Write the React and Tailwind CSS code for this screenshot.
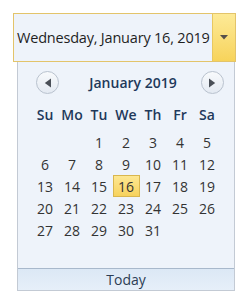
import React from 'react';

const DAYS = ['Su', 'Mo', 'Tu', 'We', 'Th', 'Fr', 'Sa'];
const CELLS = [null, null, ...Array.from({ length: 31 }, (_, i) => i + 1)];

const NavButton = ({ dir }) => (
  <div className="w-[23px] h-[23px] rounded-full border border-[#b9c2ce] bg-gradient-to-b from-[#f8fafc] to-[#e4eaf2] flex items-center justify-center">
    <svg width="8" height="10" viewBox="0 0 8 10">
      {dir === 'left' ? (
        <path d="M7 0.5 L0.8 5 L7 9.5 Z" fill="#4a4f57" />
      ) : (
        <path d="M1 0.5 L7.2 5 L1 9.5 Z" fill="#4a4f57" />
      )}
    </svg>
  </div>
);

export default function App() {
  return (
    <div
      className="w-[248px] h-[300px] bg-white relative"
      style={{ fontFamily: '"Open Sans", "Noto Sans", sans-serif' }}
    >
      {/* combo box */}
      <div className="absolute left-[13px] top-[13px] w-[223px] h-[49px] border border-[#e3c46a] bg-[#eef3fa] flex">
        <div className="flex-1 flex items-center pl-[3px] text-[14.5px] text-[#1f1f1f] tracking-[-0.2px] whitespace-nowrap">
          Wednesday, January 16, 2019
        </div>
        <div className="w-[23px] bg-gradient-to-b from-[#fdea96] to-[#f7d35a] border-l border-[#e8c860] flex items-center justify-center">
          <svg width="8" height="5" viewBox="0 0 8 5">
            <path d="M0 0 H8 L4 4.5 Z" fill="#55504a" />
          </svg>
        </div>
      </div>

      {/* popup */}
      <div className="absolute left-[17px] top-[62px] w-[218px] h-[229px] border border-[#c3cad4] border-t-0 bg-[#eef3fa] flex flex-col">
        <div className="pt-[9px] pl-[18px] pr-[10px] h-[23px] flex items-center justify-between box-content">
          <NavButton dir="left" />
          <div className="text-[14px] font-semibold text-[#1e395b] pl-[6px]">January 2019</div>
          <NavButton dir="right" />
        </div>

        <div className="w-[189px] mx-auto mt-[9px] grid grid-cols-7">
          {DAYS.map((d) => (
            <div key={d} className="h-[22px] flex items-center justify-center text-[14px] font-semibold text-[#1e395b]">
              {d}
            </div>
          ))}
        </div>

        <div className="w-[189px] mx-auto mt-[6px] grid grid-cols-7">
          {CELLS.map((n, i) => (
            <div
              key={i}
              className={`h-[22px] flex items-center justify-center text-[14px] text-[#333] ${
                n === 16 ? 'bg-gradient-to-b from-[#fde791] to-[#f7d25c] border border-[#d9b64e] text-[#111]' : ''
              }`}
            >
              {n}
            </div>
          ))}
        </div>

        <div className="flex-1" />

        <div className="h-[22px] border-t border-[#a8b8cb] bg-gradient-to-b from-[#dce8f5] to-[#e6eff9] flex items-center justify-center text-[14px] text-[#2d3e55]">
          Today
        </div>
      </div>
    </div>
  );
}
